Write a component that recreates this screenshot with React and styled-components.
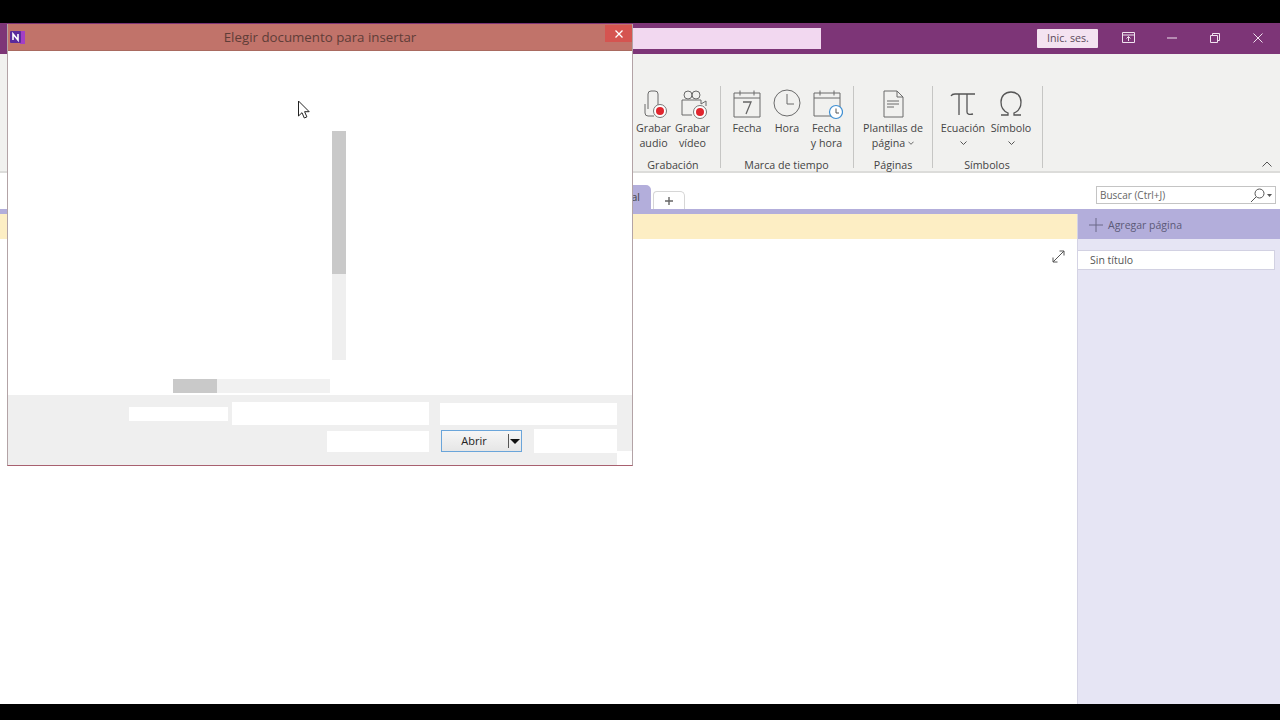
import React from 'react'
import styled, { createGlobalStyle } from 'styled-components'

const GlobalStyle = createGlobalStyle`
  html, body { margin: 0; padding: 0; height: 100%; background: #000; }
  body { font-family: "Open Sans", "Noto Sans", "Liberation Sans", sans-serif; overflow: hidden; }
  #root { height: 100%; }
`

const Screen = styled.div`
  position: relative;
  width: 1280px;
  height: 720px;
  display: flex;
  flex-direction: column;
  background: #000;
`

const Letterbox = styled.div`
  height: ${p => p.$h}px;
  flex: none;
  background: #000;
`

const Win = styled.div`
  flex: 1;
  display: flex;
  flex-direction: column;
  background: #fff;
  min-height: 0;
`

const TitleBar = styled.div`
  height: 31px;
  flex: none;
  display: flex;
  align-items: center;
  background: #7d3577;
`

const SearchBox = styled.div`
  margin-left: 500px;
  width: 321px;
  height: 21px;
  margin-top: -1px;
  background: #f2d8f0;
`

const SignIn = styled.button`
  margin-left: auto;
  margin-right: 8px;
  width: 61px;
  height: 19px;
  margin-top: -1px;
  padding: 0;
  border: 0;
  border-radius: 1px;
  background: #f4e3f1;
  color: #5b4a5a;
  font: 10.7px "Open Sans", sans-serif;
`

const WinButton = styled.div`
  width: 43.4px;
  height: 31px;
  display: flex;
  align-items: center;
  justify-content: center;
  margin-top: -2px;
  svg { display: block; }
`

const Ribbon = styled.div`
  height: 119px;
  flex: none;
  box-sizing: border-box;
  padding: 32px 0 0 634px;
  display: flex;
  align-items: flex-start;
  background: #f1f1ef;
  border-bottom: 2px solid #dcdcda;
`

const Group = styled.div`
  height: 82px;
  box-sizing: border-box;
  padding: 0 ${p => p.$right ?? 7}px 0 ${p => p.$left ?? 6}px;
  display: flex;
  flex-direction: column;
  border-right: 1px solid #c6c6c4;
`

const GroupButtons = styled.div`
  flex: 1;
  display: flex;
`

const GroupLabel = styled.div`
  height: 10px;
  line-height: 14px;
  text-align: center;
  font-size: 10.7px;
  color: #444;
  white-space: nowrap;
`

const RibbonButton = styled.div`
  width: ${p => p.$w}px;
  display: flex;
  flex-direction: column;
  align-items: center;
  color: #444;
  font-size: 10.7px;
  line-height: 15px;
  text-align: center;
  white-space: nowrap;
`

const IconSlot = styled.div`
  height: 35px;
  flex: none;
  display: flex;
  align-items: flex-end;
  justify-content: center;
  svg { display: block; }
`

const Caret = styled.svg`
  display: block;
  margin: 5px auto 0;
`

const InlineCaret = styled.svg`
  margin-left: 3px;
  vertical-align: 2px;
`

const Collapse = styled.div`
  margin-left: auto;
  margin-right: 8px;
  margin-top: 75px;
  svg { display: block; }
`

const TabRow = styled.div`
  height: 36px;
  flex: none;
  box-sizing: border-box;
  display: flex;
  align-items: flex-end;
  background: #fff;
`

const SectionTab = styled.div`
  margin-left: 560px;
  width: 91px;
  height: 24px;
  box-sizing: border-box;
  padding: 5px 11px 0 0;
  text-align: right;
  font-size: 10.5px;
  color: #444;
  background: #b3aedb;
  border-radius: 4px 5px 0 0;
`

const AddTab = styled.div`
  margin-left: 2px;
  width: 32px;
  height: 18px;
  box-sizing: border-box;
  display: flex;
  align-items: center;
  justify-content: center;
  border: 1px solid #d6d6d6;
  border-bottom: 0;
  border-radius: 4px 5px 0 0;
  svg { display: block; }
`

const FindBox = styled.div`
  margin-left: auto;
  margin-right: 4px;
  margin-bottom: 5px;
  width: 180px;
  height: 18px;
  box-sizing: border-box;
  padding: 0 3px;
  display: flex;
  align-items: center;
  justify-content: space-between;
  border: 1px solid #c4c4c4;
  font-size: 10px;
  color: #666;
  svg { display: block; }
`

const Band = styled.div`
  height: 5px;
  flex: none;
  background: #b3aedb;
`

const Content = styled.div`
  flex: 1;
  display: flex;
  min-height: 0;
`

const Main = styled.div`
  flex: 1;
  display: flex;
  flex-direction: column;
`

const InfoStrip = styled.div`
  height: 25px;
  flex: none;
  background: #fdeec4;
`

const PageArea = styled.div`
  flex: 1;
  padding: 11px 12px 0 0;
  display: flex;
  justify-content: flex-end;
  align-items: flex-start;
  svg { display: block; }
`

const Side = styled.div`
  width: 203px;
  flex: none;
  display: flex;
  flex-direction: column;
  background: #e6e5f4;
  border-left: 1px solid #d4d3e4;
  box-sizing: border-box;
`

const AddPage = styled.div`
  height: 25px;
  flex: none;
  box-sizing: border-box;
  padding: 0 0 3px 11px;
  display: flex;
  align-items: center;
  gap: 5px;
  background: #b3aedb;
  color: #5c5a78;
  font-size: 10.5px;
  svg { display: block; }
`

const PageItem = styled.div`
  margin: 11px 5px 0 0;
  height: 20px;
  box-sizing: border-box;
  padding-left: 12px;
  line-height: 18px;
  background: #fff;
  border: 1px solid #d2d1e2;
  border-left: 0;
  font-size: 10.5px;
  color: #555;
`

const Dialog = styled.div`
  position: absolute;
  left: 7px;
  top: 24px;
  width: 626px;
  height: 442px;
  box-sizing: border-box;
  display: flex;
  flex-direction: column;
  background: #fff;
  border: 1px solid #b3a3a6;
  border-top: 0;
  border-bottom-color: #a8606f;
`

const DialogTitle = styled.div`
  position: relative;
  height: 27px;
  flex: none;
  display: flex;
  align-items: center;
  justify-content: center;
  background: #c1736a;
  border-bottom: 1px solid #a96a60;
  box-sizing: border-box;
  color: #5f3d38;
  font-size: 13.3px;
`

const AppBadge = styled.svg`
  position: absolute;
  left: 2px;
  top: 6px;
`

const DialogClose = styled.div`
  position: absolute;
  right: 0;
  top: 1px;
  width: 27px;
  height: 17px;
  display: flex;
  align-items: center;
  justify-content: center;
  background: #d55450;
  svg { display: block; }
`

const DialogBody = styled.div`
  position: relative;
  flex: 1;
  box-sizing: border-box;
  padding-top: 80px;
  display: flex;
  flex-direction: column;
  background: #fff;
`

const VScroll = styled.div`
  margin-left: 324px;
  width: 14px;
  height: 229px;
  flex: none;
  background: #efefef;
`

const VThumb = styled.div`
  height: 143px;
  background: #c9c9c9;
`

const HScroll = styled.div`
  margin: 19px 0 0 165px;
  width: 157px;
  height: 14px;
  flex: none;
  background: #f1f1f1;
`

const HThumb = styled.div`
  width: 44px;
  height: 100%;
  background: #c9c9c9;
`

const Pointer = styled.svg`
  position: absolute;
  left: 289px;
  top: 49px;
`

const DialogFooter = styled.div`
  position: relative;
  height: 70px;
  flex: none;
  box-sizing: border-box;
  padding: 7px 15px 0 0;
  display: flex;
  flex-direction: column;
  gap: 4px;
  background: #efefef;
`

const FooterRow = styled.div`
  height: ${p => p.$h}px;
  flex: none;
  display: flex;
  justify-content: flex-end;
  align-items: center;
`

const Blank = styled.div`
  width: ${p => p.$w}px;
  height: ${p => p.$h}px;
  margin-left: ${p => p.$gap ?? 0}px;
  flex: none;
  background: #fff;
`

const OpenButton = styled.div`
  margin-left: 12px;
  width: 81px;
  height: 22px;
  box-sizing: border-box;
  flex: none;
  display: flex;
  align-items: center;
  border: 1px solid #6aa5da;
  background: linear-gradient(#f6f6f6, #e6e6e6);
  font-size: 11px;
  color: #222;
`

const OpenLabel = styled.div`
  width: 64px;
  margin: -1px 2px 0 0;
  text-align: center;
`

const OpenSplit = styled.div`
  width: 1px;
  height: 14px;
  background: #555;
`

const OpenArrow = styled.div`
  margin-left: 1px;
  width: 0;
  height: 0;
  border-left: 5px solid transparent;
  border-right: 5px solid transparent;
  border-top: 5px solid #111;
`

const Corner = styled.div`
  position: absolute;
  right: 0;
  bottom: 0;
  width: 15px;
  height: 14px;
  background: #fff;
`

const stroke = { fill: 'none', stroke: '#6b6b6b', strokeWidth: 1 }

const AudioIcon = () => (
  <svg width="32" height="32" viewBox="0 0 32 32">
    <path {...stroke} d="M10 20V5a3 3 0 0 1 3-3h4a3 3 0 0 1 3 3v13" />
    <path {...stroke} d="M7 15v9a3 3 0 0 0 3 3h6" />
    <circle cx="22" cy="22" r="6.5" fill="#fff" stroke="#777" />
    <circle cx="22" cy="22" r="4" fill="#e0262e" />
  </svg>
)

const VideoIcon = () => (
  <svg width="32" height="32" viewBox="0 0 32 32">
    <circle cx="11" cy="6" r="4" {...stroke} />
    <circle cx="19" cy="6" r="4" {...stroke} />
    <path {...stroke} d="M5 11h19v4M5 11v15h10" />
    <path {...stroke} d="M24 15l5-3v5" />
    <circle cx="23" cy="23" r="6.5" fill="#fff" stroke="#777" />
    <circle cx="23" cy="23" r="4" fill="#e0262e" />
  </svg>
)

const DateIcon = () => (
  <svg width="32" height="32" viewBox="0 0 32 32">
    <path {...stroke} d="M3 4h26v24H3zM3 9h26M9 1.5v5M23 1.5v5" />
    <path fill="none" stroke="#666" strokeWidth="1.3" d="M12 13h8l-5 12" />
  </svg>
)

const ClockIcon = () => (
  <svg width="32" height="32" viewBox="0 0 32 32">
    <circle cx="16" cy="14" r="13" {...stroke} />
    <path {...stroke} d="M16 5v10h7" />
  </svg>
)

const DateTimeIcon = () => (
  <svg width="32" height="32" viewBox="0 0 32 32">
    <path {...stroke} d="M24 27H3V4h26v18M3 9h26M9 1.5v5M23 1.5v5" />
    <circle cx="25" cy="23" r="6.5" fill="#fff" stroke="#3f8fd2" strokeWidth="1.2" />
    <path fill="none" stroke="#555" d="M25 19.5V24h3" />
  </svg>
)

const PageIcon = () => (
  <svg width="32" height="32" viewBox="0 0 32 32">
    <path {...stroke} d="M7 2h13l6 6v20H7zM20 2v6h6" />
    <path {...stroke} d="M10 12h12M10 15h12M10 18h7" />
  </svg>
)

const PiIcon = () => (
  <svg width="32" height="32" viewBox="0 0 32 32">
    <path fill="none" stroke="#555" strokeWidth="1.3" d="M4 7c1-2 2-2 4-2h20M12 5v21M20 5v18c0 2 2 3 6 2" />
  </svg>
)

const OmegaIcon = () => (
  <svg width="32" height="32" viewBox="0 0 32 32">
    <path fill="none" stroke="#555" strokeWidth="1.3" d="M6 26h7v-2c-5-2-7-6-7-11 0-6 4-10 10-10s10 4 10 10c0 5-2 9-7 11v2h7" />
  </svg>
)

const SmallCaret = () => (
  <Caret width="7" height="4" viewBox="0 0 7 4">
    <path fill="none" stroke="#555" d="M.5.5l3 3 3-3" />
  </Caret>
)

const groups = [
  {
    label: 'Grabación', left: 0, right: 8,
    items: [
      { w: 39, icon: <AudioIcon />, lines: ['Grabar', 'audio'] },
      { w: 39, icon: <VideoIcon />, lines: ['Grabar', 'vídeo'] },
    ],
  },
  {
    label: 'Marca de tiempo',
    items: [
      { w: 40, icon: <DateIcon />, lines: ['Fecha'] },
      { w: 40, icon: <ClockIcon />, lines: ['Hora'] },
      { w: 39, icon: <DateTimeIcon />, lines: ['Fecha', 'y hora'] },
    ],
  },
  {
    label: 'Páginas', right: 6,
    items: [{ w: 66, icon: <PageIcon />, lines: ['Plantillas de', 'página'], inlineCaret: true }],
  },
  {
    label: 'Símbolos',
    items: [
      { w: 48, icon: <PiIcon />, lines: ['Ecuación'], caret: true },
      { w: 48, icon: <OmegaIcon />, lines: ['Símbolo'], caret: true },
    ],
  },
]

export default function App() {
  return (
    <Screen>
      <GlobalStyle />
      <Letterbox $h={23} />
      <Win>
        <TitleBar>
          <SearchBox />
          <SignIn>Inic. ses.</SignIn>
          <WinButton>
            <svg width="13" height="11" viewBox="0 0 13 11">
              <path fill="none" stroke="#f0e3ef" d="M.5.5h12v10H.5zM.5 3h12M6.5 9V4.5M4.5 6.5l2-2 2 2" />
            </svg>
          </WinButton>
          <WinButton>
            <svg width="10" height="2" viewBox="0 0 10 2"><path stroke="#f0e3ef" d="M0 1h10" /></svg>
          </WinButton>
          <WinButton>
            <svg width="10" height="10" viewBox="0 0 10 10">
              <path fill="none" stroke="#f0e3ef" d="M.5 2.5h7v7h-7zM2.5 2.5v-2h7v7h-2" />
            </svg>
          </WinButton>
          <WinButton>
            <svg width="10" height="10" viewBox="0 0 10 10">
              <path stroke="#f0e3ef" d="M.5.5l9 9M9.5.5l-9 9" />
            </svg>
          </WinButton>
        </TitleBar>

        <Ribbon>
          {groups.map(group => (
            <Group key={group.label} $left={group.left} $right={group.right}>
              <GroupButtons>
                {group.items.map(item => (
                  <RibbonButton key={item.lines.join()} $w={item.w}>
                    <IconSlot>{item.icon}</IconSlot>
                    <div>{item.lines[0]}</div>
                    {item.lines[1] && (
                      <div>
                        {item.lines[1]}
                        {item.inlineCaret && (
                          <InlineCaret width="6" height="4" viewBox="0 0 7 4">
                            <path fill="none" stroke="#555" d="M.5.5l3 3 3-3" />
                          </InlineCaret>
                        )}
                      </div>
                    )}
                    {item.caret && <SmallCaret />}
                  </RibbonButton>
                ))}
              </GroupButtons>
              <GroupLabel>{group.label}</GroupLabel>
            </Group>
          ))}
          <Collapse>
            <svg width="10" height="6" viewBox="0 0 10 6">
              <path fill="none" stroke="#555" d="M.5 5.5L5 1l4.5 4.5" />
            </svg>
          </Collapse>
        </Ribbon>

        <TabRow>
          <SectionTab>al</SectionTab>
          <AddTab>
            <svg width="8" height="8" viewBox="0 0 8 8">
              <path stroke="#666" strokeWidth="1.4" d="M4 0v8M0 4h8" />
            </svg>
          </AddTab>
          <FindBox>
            Buscar (Ctrl+J)
            <svg width="22" height="15" viewBox="0 0 22 15">
              <circle cx="9.5" cy="5.5" r="4.5" fill="none" stroke="#555" />
              <path stroke="#555" d="M6 9l-5 5" />
              <path fill="#555" d="M17 6h5l-2.5 3z" />
            </svg>
          </FindBox>
        </TabRow>

        <Band />

        <Content>
          <Main>
            <InfoStrip />
            <PageArea>
              <svg width="13" height="13" viewBox="0 0 13 13">
                <path fill="none" stroke="#555" d="M1 12L12 1M7.5 1H12v4.5M1 7.5V12h4.5" />
              </svg>
            </PageArea>
          </Main>
          <Side>
            <AddPage>
              <svg width="14" height="14" viewBox="0 0 14 14">
                <path stroke="#6a6888" d="M7 0v14M0 7h14" />
              </svg>
              Agregar página
            </AddPage>
            <PageItem>Sin título</PageItem>
          </Side>
        </Content>
      </Win>
      <Letterbox $h={16} />

      <Dialog>
        <DialogTitle>
          <AppBadge width="16" height="15" viewBox="0 0 16 15">
            <rect x="10" y="1" width="5" height="13" fill="#a33fc4" />
            <rect x="0" y="1" width="11" height="12" rx="1" fill="#5a2a9c" />
            <path fill="none" stroke="#fff" strokeWidth="1.6" d="M3 10V4l5 6V4" />
          </AppBadge>
          Elegir documento para insertar
          <DialogClose>
            <svg width="8" height="8" viewBox="0 0 8 8">
              <path stroke="#fff" strokeWidth="1.3" d="M.5.5l7 7M7.5.5l-7 7" />
            </svg>
          </DialogClose>
        </DialogTitle>
        <DialogBody>
          <Pointer width="13" height="20" viewBox="0 0 13 20">
            <path fill="#fff" stroke="#222" d="M1.5 1v15l3.5-3.3 2.3 5.3 2.6-1.1-2.3-5.2h4.6z" />
          </Pointer>
          <VScroll><VThumb /></VScroll>
          <HScroll><HThumb /></HScroll>
        </DialogBody>
        <DialogFooter>
          <FooterRow $h={23}>
            <Blank $w={99} $h={14} />
            <Blank $w={197} $h={23} $gap={4} />
            <Blank $w={177} $h={22} $gap={11} />
          </FooterRow>
          <FooterRow $h={24}>
            <Blank $w={102} $h={21} />
            <OpenButton>
              <OpenLabel>Abrir</OpenLabel>
              <OpenSplit />
              <OpenArrow />
            </OpenButton>
            <Blank $w={83} $h={24} $gap={12} />
          </FooterRow>
          <Corner />
        </DialogFooter>
      </Dialog>
    </Screen>
  )
}
